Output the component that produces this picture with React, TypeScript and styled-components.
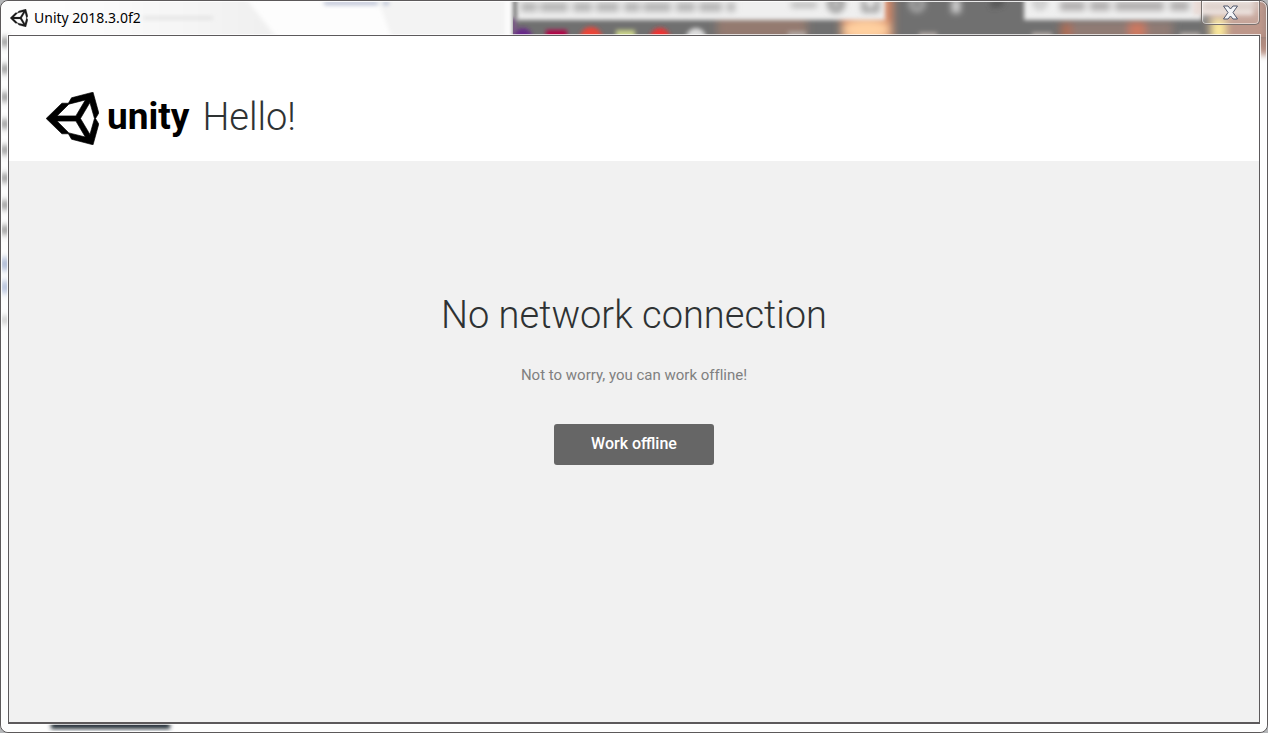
import React from "react";
import styled, { createGlobalStyle } from "styled-components";

const GlobalStyle = createGlobalStyle`
  *, *::before, *::after { box-sizing: border-box; }
  html, body, #root { height: 100%; }
  body {
    margin: 0;
    background: #b4b6b8;
    font-family: Roboto, "Liberation Sans", sans-serif;
    font-variant-ligatures: none;
    color: #2e3233;
  }
  h1, h2, p { margin: 0; font-weight: 400; }
`;

const WindowFrame = styled.div`
  position: relative;
  display: flex;
  flex-direction: column;
  min-height: 100%;
  padding: 0 7px 8px;
  overflow: hidden;
  border: 1px solid #5c595a;
  border-radius: 8px;
  background: #fdfdfd;
`;

const GlassArt = styled.svg`
  position: absolute;
  top: 0;
  left: 0;
  width: 100%;
  height: 100%;
`;

const GlassEdge = styled.div`
  position: absolute;
  inset: 0;
  border: 1px solid rgba(255, 255, 255, 0.85);
  border-radius: 7px;
  pointer-events: none;
`;

const TitleBar = styled.header`
  position: relative;
  display: flex;
  align-items: flex-start;
  justify-content: space-between;
  height: 34px;
`;

const TitleGroup = styled.div`
  display: flex;
  align-items: center;
  gap: 6px;
  height: 34px;
  padding-left: 2px;
`;

const TitleText = styled.span`
  color: #000000;
  font: 14px/20px "Noto Sans", "Open Sans", sans-serif;
`;

const CloseButton = styled.button`
  display: flex;
  align-items: center;
  justify-content: center;
  width: 59px;
  height: 24px;
  padding: 0;
  border: 1px solid #77706e;
  border-top: 0;
  border-radius: 0 0 5px 5px;
  background: linear-gradient(rgba(255, 255, 255, 0.4), rgba(255, 255, 255, 0.1));
  box-shadow: inset 0 0 0 1px rgba(255, 255, 255, 0.5);
`;

const Client = styled.main`
  position: relative;
  display: flex;
  flex: 1;
  flex-direction: column;
  border: 1px solid #5c595b;
  border-bottom-width: 2px;
  background: #f1f1f1;
  box-shadow: 0 0 0 1px rgba(255, 255, 255, 0.75);
`;

const Banner = styled.div`
  display: flex;
  align-items: center;
  height: 125px;
  padding: 39px 37px 0;
  background: #ffffff;
`;

const Brand = styled.div`
  display: flex;
  align-items: center;
  gap: 8px;
  margin-right: 13px;
  color: #000000;
`;

const Wordmark = styled.span`
  padding-bottom: 2px;
  font-size: 37px;
  font-weight: 700;
  line-height: 40px;
`;

const Greeting = styled.h1`
  padding-bottom: 2px;
  font-size: 38px;
  font-weight: 350;
  line-height: 40px;
`;

const Message = styled.section`
  display: flex;
  flex-direction: column;
  align-items: center;
  padding: 130px 24px 24px;
  text-align: center;
`;

const Heading = styled.h2`
  font-size: 38px;
  font-weight: 350;
  line-height: 48px;
`;

const Detail = styled.p`
  margin-top: 26px;
  color: #808080;
  font-size: 15px;
  line-height: 20px;
`;

const PrimaryButton = styled.button`
  width: 160px;
  height: 41px;
  margin-top: 39px;
  padding: 0 0 2px;
  border: 0;
  border-radius: 3px;
  background: #666666;
  color: #ffffff;
  font: 500 16px/20px Roboto, sans-serif;
`;

function UnityMark({ size, color = "#000000" }: { size: number; color?: string }) {
  return (
    <svg width={size} height={size} viewBox="14 13 486 486" aria-hidden="true">
      <path
        fill={color}
        stroke={color}
        strokeWidth="6"
        d="M498.11 206.4 445.31 14.72 248.2 66.08 219 116.14l-59.2-.43L15.54 256l144.28 140.32 59.17-.43 29.24 50 197.08 51.36 52.8-191.62-30-49.63ZM223.77 124.2l150.78-37.69L288 232.33H114.87Zm0 263.63L114.87 279.71H288l86.55 145.81Zm193 14L330.17 256l86.58-145.84L458.56 256Z"
      />
    </svg>
  );
}

/* Out-of-focus desktop seen through the glass frame. */
function Glass() {
  return (
    <GlassArt aria-hidden="true">
      <defs>
        <filter id="soft" x="-20%" y="-100%" width="140%" height="300%">
          <feGaussianBlur stdDeviation="4" />
        </filter>
        <filter id="fine" x="-20%" y="-200%" width="140%" height="500%">
          <feGaussianBlur stdDeviation="3" />
        </filter>
        <filter id="bar" filterUnits="userSpaceOnUse" x="-20" y="-40" width="1400" height="120">
          <feGaussianBlur stdDeviation="2" />
        </filter>
        <linearGradient id="sheen">
          <stop offset="0" stopColor="#fdfdfd" />
          <stop offset="1" stopColor="#efefef" />
        </linearGradient>
      </defs>
      <path d="M60-9H240L282 45H60Z" fill="url(#sheen)" filter="url(#bar)" />
      <path d="M374-9H504V45H394Z" fill="#f3f3f3" filter="url(#bar)" />
      <g filter="url(#bar)">
        <path d="M142 17H212" stroke="#d6d6d6" strokeWidth="2" />
        <path d="M323 2H388" stroke="#b7bfd3" strokeWidth="4" strokeDasharray="54 5" />
      </g>
      <rect x="512" y="-10" width="780" height="56" fill="#6f6f6f" filter="url(#bar)" />
      <svg x="512" width="756" height="36">
        <g filter="url(#soft)">
          <rect x="204" y="15" width="90" height="24" fill="#947a70" />
          <rect x="328" y="-6" width="52" height="48" fill="#d88a68" />
          <ellipse cx="353" cy="29" rx="24" ry="11" fill="#ffd0a0" />
          <rect x="550" y="20" width="110" height="20" fill="#917c74" />
          <rect x="548" y="22" width="10" height="18" fill="#b36c51" />
          <rect x="616" y="20" width="16" height="20" fill="#cf7961" />
          <rect x="696" y="-4" width="60" height="46" fill="#bd978a" />
          <rect x="699" y="18" width="13" height="22" fill="#ffee9c" />
        </g>
        <g filter="url(#bar)">
          <rect x="4" y="-4" width="368" height="23" fill="#efefef" />
          <rect x="511" y="-4" width="178" height="23" fill="#efefef" />
          <rect x="680" y="-4" width="60" height="18" fill="#e9dcd7" />
          <rect x="-4" y="17" width="8" height="20" fill="#745580" />
        </g>
        <g filter="url(#fine)" fill="none">
          <path d="M8 6H222" stroke="#b4b4b4" strokeWidth="9" strokeDasharray="16 3 28 5 19 4 23 5" />
          <path d="M278 4h26" stroke="#a4a4a4" strokeWidth="4" />
          <circle cx="323" cy="3" r="6" stroke="#969696" strokeWidth="6" />
          <path d="M351-2V9h13V-2" stroke="#8b8b8b" strokeWidth="4" />
          <circle cx="404" cy="3" r="6" stroke="#bcbcbc" strokeWidth="4" />
          <path d="M443-2V12" stroke="#d0d0d0" strokeWidth="9" />
          <path d="M478 4l12-3" stroke="#484848" strokeWidth="5" />
          <circle cx="527" cy="2" r="5" stroke="#aaaaaa" strokeWidth="3" />
          <path d="M547 5H676" stroke="#adabab" strokeWidth="9" strokeDasharray="25 5 20 5 49 6" />
          <path d="M690 5h55" stroke="#c2aea5" strokeWidth="6" />
        </g>
        <g filter="url(#bar)">
          <circle cx="10" cy="36" r="9" fill="#682589" />
          <rect x="33" y="29" width="21" height="14" fill="#b20145" />
          <circle cx="78" cy="37" r="11" fill="#eb4439" />
          <rect x="103" y="29" width="19" height="14" fill="#c9d38a" />
          <circle cx="147" cy="37" r="10" fill="#ef3030" />
          <circle cx="183" cy="37" r="10" fill="#dddddd" />
          <path d="M275 33h18M406 34h18M519 34h20M667 34h20" stroke="#b4aaa5" strokeWidth="5" />
        </g>
      </svg>
      <rect x="1257" y="34" width="12" height="20" fill="#b58d80" filter="url(#fine)" />
      <g filter="url(#fine)">
        {[41, 68, 96, 123, 149, 177, 204, 229].map((y) => (
          <ellipse key={y} cx="4" cy={y} rx="5" ry="5" fill="#8c8c8c" />
        ))}
        <ellipse cx="4" cy="263" rx="5" ry="7" fill="#a4b2d0" />
        <ellipse cx="4" cy="286" rx="5" ry="7" fill="#b0bdda" />
        <ellipse cx="4" cy="319" rx="5" ry="4" fill="#c1c1c1" />
      </g>
      <svg y="100%" overflow="visible">
        <rect x="50" y="-11" width="119" height="8" fill="#27313b" filter="url(#bar)" />
      </svg>
    </GlassArt>
  );
}

export default function App() {
  return (
    <>
      <GlobalStyle />
      <WindowFrame>
        <Glass />
        <GlassEdge />
        <TitleBar>
          <TitleGroup>
            <UnityMark size={18} color="#1c1c1c" />
            <TitleText>Unity 2018.3.0f2</TitleText>
          </TitleGroup>
          <CloseButton aria-label="Close">
            <svg width="17" height="15" viewBox="0 0 17 15" aria-hidden="true">
              <path
                d="M1.5 1H6L8.5 4 11 1H15.500L11 7.500 15.500 14H11L8.500 11 6 14H1.500L6 7.500Z"
                fill="#f4f5f8"
                stroke="#50576b"
                strokeLinejoin="round"
              />
            </svg>
          </CloseButton>
        </TitleBar>
        <Client>
          <Banner>
            <Brand>
              <UnityMark size={53} />
              <Wordmark>unity</Wordmark>
            </Brand>
            <Greeting>Hello!</Greeting>
          </Banner>
          <Message>
            <Heading>No network connection</Heading>
            <Detail>Not to worry, you can work offline!</Detail>
            <PrimaryButton>Work offline</PrimaryButton>
          </Message>
        </Client>
      </WindowFrame>
    </>
  );
}
